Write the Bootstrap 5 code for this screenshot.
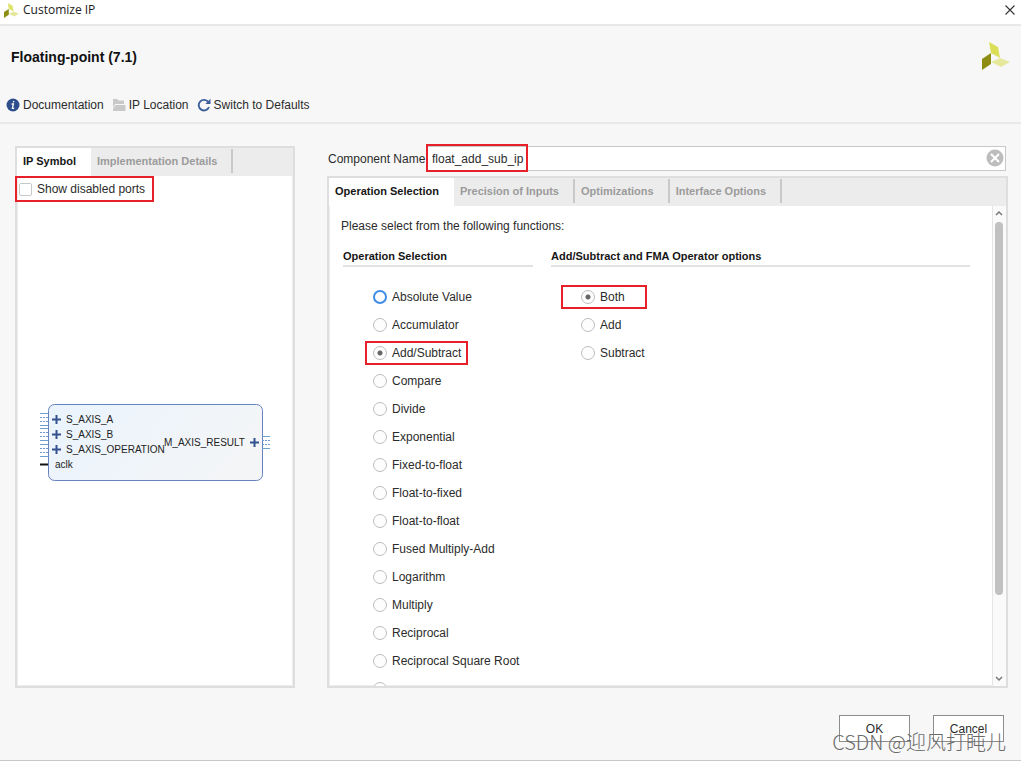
<!DOCTYPE html>
<html lang="en">
<head>
<meta charset="utf-8">
<meta name="viewport" content="width=device-width, initial-scale=1">
<title>Customize IP</title>
<link href="https://cdn.jsdelivr.net/npm/bootstrap@5.3.0/dist/css/bootstrap.min.css" rel="stylesheet">
<style>
  body { font: 12px/16px "Liberation Sans", Arial, sans-serif; color: #2b2b2b; background: #f7f7f7; }
  .dialog { height: 100vh; min-height: 480px; border-bottom: 1px solid #c8c8c8; }
  .title-bar { height: 26px; padding: 0 2px 4px 4px; border-bottom: 2px solid #e8e8e8; font: 12px/16px "Open Sans", sans-serif; color: #1a1a1a; background: #fff; }
  .plain-btn { border: 0; padding: 0; background: none; line-height: 0; }
  .ip-head { height: 98px; padding: 15px 11px 9px 6px; border-bottom: 2px solid #e8e8e8; }
  .ip-head > svg { margin-top: 1px; }
  .ip-title { font-size: 14px; line-height: 16px; font-weight: bold; color: #111; margin: 0 0 0 5px; }
  .tool-link { color: #2b2b2b; text-decoration: none; gap: 3px; }
  .work { min-height: 0; padding: 22px 13px 0 15px; gap: 32px; }
  .symbol-col { width: 280px; }
  .options-col { min-width: 0; }
  .panel { border: 2px solid #dedede; box-shadow: inset 0 0 0 1px #ececec; background: #fff; min-height: 0; }
  .tab-strip { height: 28px; background: #ececec; font-size: 11px; }
  .tab-strip .nav-link { height: 26px; padding: 0 16px 0 6px; border-radius: 0; color: #9b9b9b; font-weight: bold; white-space: nowrap; }
  .tab-strip .nav-link.active { height: 28px; padding: 0 15px 2px 6px; background: #fff; color: #161616; }
  .tab-strip .ruled::after { content: ""; width: 2px; height: 24px; margin: 0 -16px 0 14px; background: #c9c9c9; }
  .red-frame { border: 2px solid #e8202a !important; }
  .ports-row { width: 139px; height: 26px; gap: 5px; padding-left: 2px; margin: 0 0 0 -2px; }
  .form-check-input.tick { width: 13px; height: 13px; margin: 0; border: 1px solid #c8c8c8; border-radius: 2px; }
  .name-row { height: 25px; margin-bottom: 5px; }
  .name-row label { width: 100px; padding-left: 1px; white-space: nowrap; }
  .name-box { position: relative; height: 25px; margin-right: 2px; }
  .name-box .form-control { height: 25px; padding: 0 26px 0 4px; border: 1px solid #c8c8c8; border-radius: 0; font-size: 12px; line-height: 16px; color: #2b2b2b; }
  .name-mark { position: absolute; left: -1px; top: -2px; width: 102px; height: 28px; pointer-events: none; }
  .name-box .plain-btn { position: absolute; right: 2px; top: 3px; }
  .functions { padding: 12px 22px 0 14px; overflow: hidden; }
  .intro { margin: 0 0 14px -2px; }
  .groups { gap: 18px; }
  .group-a { width: 190px; }
  .group-title { font-size: 11px; line-height: 16px; font-weight: bold; color: #161616; border-bottom: 2px solid #e2e2e2; margin: 0 0 18px; padding-bottom: 1px; white-space: nowrap; }
  .choice { height: 24px; gap: 5px; margin-bottom: 4px; padding: 0 5px 0 6px; border: 2px solid transparent; white-space: nowrap; }
  .group-a .choice { margin-left: 22px; }
  .group-b .choice { margin-left: 10px; padding: 0 20px 0 18px; }
  .form-check-input.dot { width: 14px; height: 14px; margin: 0; border: 1px solid #bdbdbd; background-color: #fdfdfd; background-image: none; }
  .form-check-input.dot:checked { background-image: radial-gradient(circle, #666 0 2px, transparent 3px); }
  .form-check-input.focused { border: 2px solid #3f8de6; }
  .scroll-rail { width: 14px; padding: 4px 3px 4px 1px; background: #fafafa; border-left: 1px solid #e6e6e6; }
  .scroll-thumb { width: 8px; height: 79%; border-radius: 4px; background: #c1c1c1; margin-top: 6px; }
  .dialog-foot { height: 72px; padding: 27px 17px 0 0; gap: 23px; position: relative; }
  .dialog-foot .btn { width: 71px; height: 27px; padding: 0; border: 1px solid #8d8d8d; border-radius: 0; background: #fff; font-size: 12px; line-height: 16px; color: #2b2b2b; }
  .stamp { position: absolute; right: 15px; top: 42px; font: 300 20px/24px "Noto Sans CJK SC", sans-serif; color: #6b6b6b; white-space: nowrap; pointer-events: none; }
</style>
</head>
<body>
<div class="dialog d-flex flex-column">
  <header class="title-bar d-flex align-items-center flex-shrink-0">
    <svg width="15" height="15" viewBox="0 0 28 28" aria-hidden="true"><path d="M7 0L16 5L18 16L9 11Z" fill="#dfe36b"/><path d="M0 17L9 11V22L0 28Z" fill="#8c8d12"/><path d="M9 20L18 16L28 20L19 25Z" fill="#e6e89c"/></svg>
    <span class="ms-1 me-auto">Customize IP</span>
    <button class="plain-btn me-1" type="button" aria-label="Close"><svg width="10" height="10" viewBox="0 0 10 10"><path d="M.5 .5L9.500 9.500M9.500 .5L.5 9.500" stroke="#333" stroke-width="1.100"/></svg></button>
  </header>

  <section class="ip-head d-flex justify-content-between flex-shrink-0">
    <div class="d-flex flex-column justify-content-between">
      <h1 class="ip-title mt-2">Floating-point (7.1)</h1>
      <nav class="d-flex">
        <a class="tool-link d-flex align-items-center me-2" href="#"><svg width="14" height="14" viewBox="0 0 14 14"><circle cx="7" cy="7" r="6.500" fill="#2f4f8c"/><path d="M7.800 3L7.500 4.300M5.600 6H7.400L6.400 10.300H8.200" fill="none" stroke="#fff" stroke-width="1.300"/></svg>Documentation</a>
        <a class="tool-link d-flex align-items-center me-2" href="#"><svg width="14" height="14" viewBox="0 0 14 14"><path d="M1 1H5L6.500 2.500H12V6H3L1 10Z" fill="#c9c9c9"/><path d="M3.500 7H13.500V13H1V11Z" fill="#c9c9c9"/></svg>IP Location</a>
        <a class="tool-link d-flex align-items-center" href="#"><svg width="14" height="14" viewBox="0 0 14 14"><path d="M11.300 4A5.300 5.300 0 1 0 12 9" fill="none" stroke="#3d5f99" stroke-width="1.900"/><path d="M13.500 .8V6H8.300Z" fill="#3d5f99"/></svg>Switch to Defaults</a>
      </nav>
    </div>
    <svg width="28" height="28" viewBox="0 0 28 28" role="img" aria-label="Logo"><path d="M7 0L16 5L18 16L9 11Z" fill="#dbdf58"/><path d="M0 17L9 11V22L0 28Z" fill="#8c8d12"/><path d="M9 20L18 16L28 20L19 25Z" fill="#e6e89c"/></svg>
  </section>

  <main class="work d-flex flex-grow-1">
    <section class="symbol-col panel flex-shrink-0 d-flex flex-column">
      <nav class="nav tab-strip flex-nowrap flex-shrink-0">
        <a class="nav-link active d-flex align-items-center" href="#">IP Symbol</a>
        <a class="nav-link ruled d-flex align-items-center" href="#">Implementation Details</a>
      </nav>
      <label class="ports-row red-frame d-flex align-items-center flex-shrink-0" for="ports"><input class="form-check-input tick" type="checkbox" id="ports">Show disabled ports</label>
      <div class="symbol-area flex-grow-1 d-flex align-items-center justify-content-center">
        <svg width="230" height="80" viewBox="0 0 230 80" font-family="Liberation Sans, Arial, sans-serif" font-size="10" fill="#222">
          <defs>
            <linearGradient id="face" x2="1" y2=".3"><stop stop-color="#eaf3fd"/><stop offset="1" stop-color="#f3f5f7"/></linearGradient>
            <g id="bus" stroke="#6f9fce"><path d="M0 .5H8M0 12.500H8"/><path d="M0 4.500H8M0 8.500H8" stroke-dasharray="2 1"/></g>
            <path id="plus" d="M0 4.500H9M4.500 0V9" stroke="#34528f" stroke-width="2"/>
          </defs>
          <rect x="8.500" y=".5" width="214" height="76" rx="6" fill="url(#face)" stroke="#6683bd"/>
          <use href="#bus" x="0" y="9"/><use href="#bus" x="0" y="24"/><use href="#bus" x="0" y="40"/><use href="#bus" x="222" y="32"/>
          <path d="M0 60.500H8" stroke="#111" stroke-width="2"/>
          <use href="#plus" x="12" y="11"/><use href="#plus" x="12" y="26"/><use href="#plus" x="12" y="41"/><use href="#plus" x="210" y="34"/>
          <text x="26" y="19">S_AXIS_A</text><text x="26" y="34">S_AXIS_B</text><text x="26" y="49">S_AXIS_OPERATION</text><text x="15" y="64">aclk</text>
          <text x="124" y="42">M_AXIS_RESULT</text>
        </svg>
      </div>
    </section>

    <section class="options-col flex-grow-1 d-flex flex-column">
      <div class="name-row d-flex align-items-center flex-shrink-0">
        <label for="component">Component Name</label>
        <div class="name-box flex-grow-1">
          <input class="form-control" id="component" type="text" value="float_add_sub_ip">
          <span class="name-mark red-frame"></span>
          <button class="plain-btn" type="button" aria-label="Clear"><svg width="18" height="18" viewBox="0 0 18 18"><circle cx="9" cy="9" r="8.500" fill="#bdbdbd"/><path d="M5 5L13 13M13 5L5 13" stroke="#fff" stroke-width="2"/></svg></button>
        </div>
      </div>
      <div class="panel flex-grow-1 d-flex flex-column">
        <nav class="nav tab-strip flex-nowrap flex-shrink-0">
          <a class="nav-link active d-flex align-items-center" href="#">Operation Selection</a>
          <a class="nav-link ruled d-flex align-items-center" href="#">Precision of Inputs</a>
          <a class="nav-link ruled d-flex align-items-center" href="#">Optimizations</a>
          <a class="nav-link ruled d-flex align-items-center" href="#">Interface Options</a>
        </nav>
        <div class="d-flex flex-grow-1 overflow-hidden">
          <div class="functions flex-grow-1">
            <p class="intro">Please select from the following functions:</p>
            <div class="groups d-flex">
              <div class="group-a flex-shrink-0">
                <h2 class="group-title">Operation Selection</h2>
                <div class="d-flex flex-column align-items-start">
                  <label class="choice d-flex align-items-center"><input class="form-check-input dot focused" type="radio" name="op">Absolute Value</label>
                  <label class="choice d-flex align-items-center"><input class="form-check-input dot" type="radio" name="op">Accumulator</label>
                  <label class="choice red-frame d-flex align-items-center"><input class="form-check-input dot" type="radio" name="op" checked>Add/Subtract</label>
                  <label class="choice d-flex align-items-center"><input class="form-check-input dot" type="radio" name="op">Compare</label>
                  <label class="choice d-flex align-items-center"><input class="form-check-input dot" type="radio" name="op">Divide</label>
                  <label class="choice d-flex align-items-center"><input class="form-check-input dot" type="radio" name="op">Exponential</label>
                  <label class="choice d-flex align-items-center"><input class="form-check-input dot" type="radio" name="op">Fixed-to-float</label>
                  <label class="choice d-flex align-items-center"><input class="form-check-input dot" type="radio" name="op">Float-to-fixed</label>
                  <label class="choice d-flex align-items-center"><input class="form-check-input dot" type="radio" name="op">Float-to-float</label>
                  <label class="choice d-flex align-items-center"><input class="form-check-input dot" type="radio" name="op">Fused Multiply-Add</label>
                  <label class="choice d-flex align-items-center"><input class="form-check-input dot" type="radio" name="op">Logarithm</label>
                  <label class="choice d-flex align-items-center"><input class="form-check-input dot" type="radio" name="op">Multiply</label>
                  <label class="choice d-flex align-items-center"><input class="form-check-input dot" type="radio" name="op">Reciprocal</label>
                  <label class="choice d-flex align-items-center"><input class="form-check-input dot" type="radio" name="op">Reciprocal Square Root</label>
                  <label class="choice d-flex align-items-center"><input class="form-check-input dot" type="radio" name="op" aria-label="Next function"></label>
                </div>
              </div>
              <div class="group-b flex-grow-1">
                <h2 class="group-title">Add/Subtract and FMA Operator options</h2>
                <div class="d-flex flex-column align-items-start">
                  <label class="choice red-frame d-flex align-items-center"><input class="form-check-input dot" type="radio" name="mode" checked>Both</label>
                  <label class="choice d-flex align-items-center"><input class="form-check-input dot" type="radio" name="mode">Add</label>
                  <label class="choice d-flex align-items-center"><input class="form-check-input dot" type="radio" name="mode">Subtract</label>
                </div>
              </div>
            </div>
          </div>
          <div class="scroll-rail flex-shrink-0 d-flex flex-column align-items-center" aria-hidden="true">
            <svg class="flex-shrink-0" width="8" height="6" viewBox="0 0 8 6"><path d="M1 5L4 2L7 5" fill="none" stroke="#777" stroke-width="1.500"/></svg>
            <div class="scroll-thumb"></div>
            <svg class="flex-shrink-0 mt-auto" width="8" height="6" viewBox="0 0 8 6"><path d="M1 1L4 4L7 1" fill="none" stroke="#777" stroke-width="1.500"/></svg>
          </div>
        </div>
      </div>
    </section>
  </main>

  <footer class="dialog-foot d-flex justify-content-end align-items-start flex-shrink-0">
    <button class="btn" type="button">OK</button>
    <button class="btn" type="button">Cancel</button>
    <span class="stamp">CSDN @迎风打盹儿</span>
  </footer>
</div>
<script src="https://cdn.jsdelivr.net/npm/bootstrap@5.3.0/dist/js/bootstrap.bundle.min.js"></script>
</body>
</html>
